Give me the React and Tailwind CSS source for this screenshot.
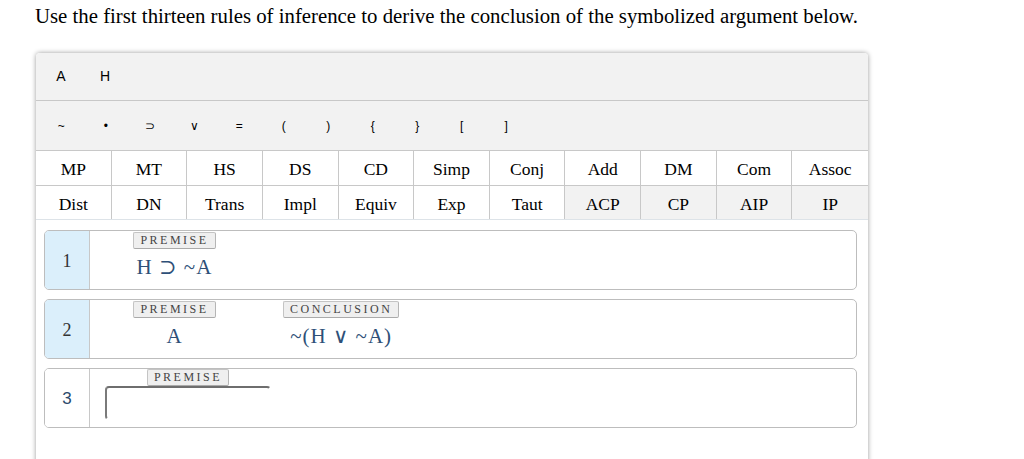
import React from "react";

const serif = { fontFamily: '"Liberation Serif", "DejaVu Serif", serif' };
const sans = { fontFamily: '"Liberation Sans", Arial, sans-serif' };

const rules1 = ["MP", "MT", "HS", "DS", "CD", "Simp", "Conj", "Add", "DM", "Com", "Assoc"];
const rules2 = ["Dist", "DN", "Trans", "Impl", "Equiv", "Exp", "Taut", "ACP", "CP", "AIP", "IP"];
const disabled = ["ACP", "CP", "AIP", "IP"];
const symbols = ["~", "•", "⊃", "∨", "=", "(", ")", "{", "}", "[", "]"];

function Badge({ children }) {
  return (
    <div
      className="h-[17px] px-[6px] bg-[#efefef] border border-[#c4c4c4] border-b-[#aaa] border-r-[#b5b5b5] rounded-[2px] text-[12px] leading-[15px] tracking-[2.5px] text-[#444] whitespace-nowrap"
      style={serif}
    >
      {children}
    </div>
  );
}

function Formula({ children }) {
  return (
    <div className="mt-[6px] text-[21px] leading-[24px] tracking-[1px] text-[#2e5078] whitespace-nowrap" style={serif}>
      {children}
    </div>
  );
}

function Card({ num, blue, sansNum, children }) {
  return (
    <div className="flex h-[60px] border border-[#bdbdbd] rounded-[5px] overflow-hidden bg-white">
      <div
        className={
          "w-[45px] shrink-0 flex items-center justify-center border-r border-[#c8c8c8] " +
          (blue ? "bg-[#dbeffb]" : "bg-white")
        }
      >
        {sansNum ? (
          <span className="text-[17px] text-[#2b4a6b] mt-[1px]" style={sans}>{num}</span>
        ) : (
          <span className="text-[18px] text-[#333] mt-[2px]" style={serif}>{num}</span>
        )}
      </div>
      <div className="flex-1 flex items-start">{children}</div>
    </div>
  );
}

export default function App() {
  return (
    <div className="w-[1024px] h-[459px] overflow-hidden bg-white">
      <p className="pl-[35px] pt-[3px] text-[20.8px] leading-[25px] text-black whitespace-nowrap" style={serif}>
        Use the first thirteen rules of inference to derive the conclusion of the symbolized argument below.
      </p>
      <div className="ml-[36px] mt-[25px] w-[832px] h-[420px] rounded-t-[4px] bg-white shadow-[0_0_5px_rgba(0,0,0,0.4)]">
        <div className="h-[48px] flex items-center pl-[3px] bg-[#f2f2f2] border-b border-[#c8c8c8] rounded-t-[4px]">
          {["A", "H"].map((l) => (
            <div key={l} className="w-[44px] text-center text-[14px] text-black -mt-[1px]" style={sans}>
              {l}
            </div>
          ))}
        </div>
        <div className="h-[50px] flex items-center pl-[3px] bg-[#f2f2f2] border-b border-[#c8c8c8]">
          {symbols.map((s) => (
            <div key={s} className="w-[44.5px] text-center text-[12px] text-black" style={sans}>
              {s}
            </div>
          ))}
        </div>
        <div className="grid grid-cols-11 border-b border-[#dde3e8]">
          {rules1.map((r, i) => (
            <div
              key={r}
              className={
                "h-[35px] flex items-center justify-center pt-[3px] bg-white border-b border-[#c8c8c8] text-[17.5px] text-black " +
                (i < 10 ? "border-r" : "")
              }
              style={serif}
            >
              {r}
            </div>
          ))}
          {rules2.map((r, i) => (
            <div
              key={r}
              className={
                "h-[33px] flex items-center justify-center pt-[3px] border-[#c8c8c8] text-[17.5px] text-black " +
                (i < 10 ? "border-r " : "") +
                (disabled.includes(r) ? "bg-[#f2f2f2]" : "bg-white")
              }
              style={serif}
            >
              {r}
            </div>
          ))}
        </div>
        <div className="pt-[10px] pl-[8px] pr-[11px] flex flex-col gap-[9px]">
          <Card num="1" blue>
            <div className="ml-[45px] mt-[1px] flex flex-col items-center w-[79px]">
              <Badge>PREMISE</Badge>
              <Formula>H ⊃ ~A</Formula>
            </div>
          </Card>
          <Card num="2" blue>
            <div className="ml-[45px] mt-[1px] flex flex-col items-center w-[79px]">
              <Badge>PREMISE</Badge>
              <Formula>A</Formula>
            </div>
            <div className="ml-[69px] mt-[1px] flex flex-col items-center">
              <Badge>CONCLUSION</Badge>
              <Formula>~(H ∨ ~A)</Formula>
            </div>
          </Card>
          <Card num="3" sansNum>
            <div className="ml-[15px] flex flex-col items-center w-[166px]">
              <Badge>PREMISE</Badge>
              <div className="w-[166px] h-[34px] border-2 border-t-[#6e6e6e] border-l-[#7a7a7a] border-r-transparent border-b-transparent rounded-[4px] bg-white" />
            </div>
          </Card>
        </div>
      </div>
    </div>
  );
}
